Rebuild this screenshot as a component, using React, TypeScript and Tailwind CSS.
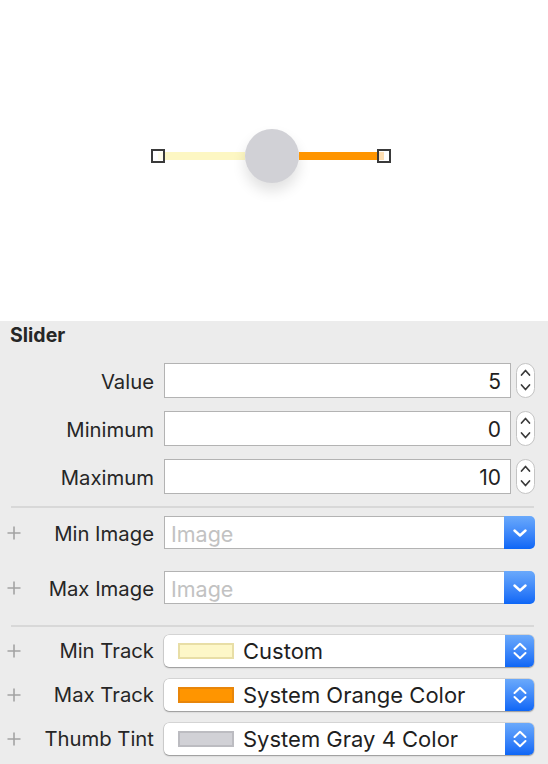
import React from "react"

const font = { fontFamily: "Inter, 'Liberation Sans', sans-serif" }

function Plus() {
  return (
    <svg width="14" height="14" viewBox="0 0 14 14" className="shrink-0">
      <path d="M7 0.5V13.5M0.5 7H13.5" stroke="#a3a3a3" strokeWidth="1.6" />
    </svg>
  )
}

function Stepper() {
  return (
    <svg width="19" height="35" viewBox="0 0 19 35" className="ml-[5px] shrink-0">
      <rect x="0.5" y="0.5" width="18" height="34" rx="9" fill="#ffffff" stroke="#c4c4c4" />
      <path d="M5.5 12L9.5 7.5L13.5 12" fill="none" stroke="#3a3a3a" strokeWidth="1.7" strokeLinecap="round" strokeLinejoin="round" />
      <path d="M5.5 22L9.5 26.5L13.5 22" fill="none" stroke="#3a3a3a" strokeWidth="1.7" strokeLinecap="round" strokeLinejoin="round" />
    </svg>
  )
}

function DownChevron() {
  return (
    <svg width="14" height="8" viewBox="0 0 14 8">
      <path d="M1.5 1.5L7 6.5L12.5 1.5" fill="none" stroke="#ffffff" strokeWidth="2.4" strokeLinecap="round" strokeLinejoin="round" />
    </svg>
  )
}

function UpDownChevron() {
  return (
    <svg width="14" height="18" viewBox="0 0 14 18">
      <path d="M1.5 7L7 1.8L12.5 7" fill="none" stroke="#ffffff" strokeWidth="2" strokeLinecap="round" strokeLinejoin="round" />
      <path d="M1.5 11L7 16.2L12.5 11" fill="none" stroke="#ffffff" strokeWidth="2" strokeLinecap="round" strokeLinejoin="round" />
    </svg>
  )
}

function Row({
  label,
  plus,
  low,
  className,
  children,
}: {
  label: string
  plus?: boolean
  low?: boolean
  className?: string
  children: React.ReactNode
}) {
  return (
    <div className={`flex items-center pl-[7px] ${className ?? ""}`}>
      <div className="w-[14px] shrink-0">{plus && <Plus />}</div>
      <div
        className={`w-[133px] shrink-0 whitespace-nowrap text-right text-[20.3px] text-[#262626] leading-none ${
          low ? "pt-[4px]" : ""
        }`}
      >
        {label}
      </div>
      <div className="ml-[10px] flex items-center">{children}</div>
    </div>
  )
}

function NumberField({ value }: { value: string }) {
  return (
    <>
      <div className="flex h-[35px] w-[347px] items-center justify-end border border-[#b3b3b3] bg-white pr-[9px] pt-[3px] text-[21px] text-[#1f1f1f]">
        {value}
      </div>
      <Stepper />
    </>
  )
}

function ImagePopup() {
  return (
    <div className="flex h-[33px] w-[371px]">
      <div className="flex flex-1 items-center border border-r-0 border-[#b3b3b3] bg-white pl-[6px] pt-[3px] text-[21.5px] text-[#c2c2c2]">
        Image
      </div>
      <div className="flex w-[31px] items-center justify-center rounded-r-[5px] bg-gradient-to-b from-[#6aa9fb] to-[#0c66f6]">
        <DownChevron />
      </div>
    </div>
  )
}

function ColorPopup({ swatch, border, text }: { swatch: string; border: string; text: string }) {
  return (
    <div className="flex h-[32px] w-[370px] overflow-hidden rounded-[5px] bg-white shadow-[0_0_0_0.5px_rgba(0,0,0,0.18),0_1px_1.5px_rgba(0,0,0,0.3)]">
      <div className="flex flex-1 items-center pl-[14px]">
        <div className="h-[16px] w-[56px] border-2" style={{ backgroundColor: swatch, borderColor: border }} />
        <span className="ml-[9px] whitespace-nowrap text-[22px] text-[#1f1f1f]">{text}</span>
      </div>
      <div className="flex w-[29px] items-center justify-center bg-gradient-to-b from-[#6aa9fb] to-[#0c66f6]">
        <UpDownChevron />
      </div>
    </div>
  )
}

export default function App() {
  return (
    <div className="h-[764px] w-[548px] overflow-hidden bg-white" style={font}>
      {/* canvas with slider preview */}
      <div className="flex h-[321px] items-start justify-center">
        <div className="relative ml-[-6px] mt-[129px] h-[54px] w-[240px]">
          <div className="flex h-full items-center px-[7px]">
            <div className="h-[8px] w-[87px] bg-[#fdf7c3]" />
            <div className="h-[54px] w-[54px] shrink-0 rounded-full bg-[#d1d1d6] shadow-[0_8px_14px_rgba(0,0,0,0.12)]" />
            <div className="h-[8px] flex-1 bg-[#ff9500]" />
          </div>
          <div className="absolute left-0 top-[20px] h-[14px] w-[14px] border-2 border-[#3a3a3a] bg-white/70" />
          <div className="absolute right-0 top-[20px] h-[14px] w-[14px] border-2 border-[#3a3a3a] bg-white/70" />
        </div>
      </div>

      {/* inspector panel */}
      <div className="h-[443px] bg-[#ececec]">
        <div className="h-[28px] pl-[10px] text-[19.5px] font-bold leading-[28px] text-[#262626]">Slider</div>

        <Row label="Value" low className="mt-[14px]">
          <NumberField value="5" />
        </Row>
        <Row label="Minimum" low className="mt-[13px]">
          <NumberField value="0" />
        </Row>
        <Row label="Maximum" low className="mt-[13px]">
          <NumberField value="10" />
        </Row>

        <div className="ml-[11px] mt-[12px] h-[2px] w-[523px] bg-[#d8d8d8]" />

        <Row label="Min Image" plus low className="mt-[8px]">
          <ImagePopup />
        </Row>
        <Row label="Max Image" plus low className="mt-[22px]">
          <ImagePopup />
        </Row>

        <div className="ml-[11px] mt-[21px] h-[2px] w-[523px] bg-[#d8d8d8]" />

        <Row label="Min Track" plus className="mt-[8px]">
          <ColorPopup swatch="#fdf7c8" border="#e8dea6" text="Custom" />
        </Row>
        <Row label="Max Track" plus className="mt-[12px]">
          <ColorPopup swatch="#ff9500" border="#e8860a" text="System Orange Color" />
        </Row>
        <Row label="Thumb Tint" plus className="mt-[12px]">
          <ColorPopup swatch="#d1d1d6" border="#bcbcc1" text="System Gray 4 Color" />
        </Row>
      </div>
    </div>
  )
}
